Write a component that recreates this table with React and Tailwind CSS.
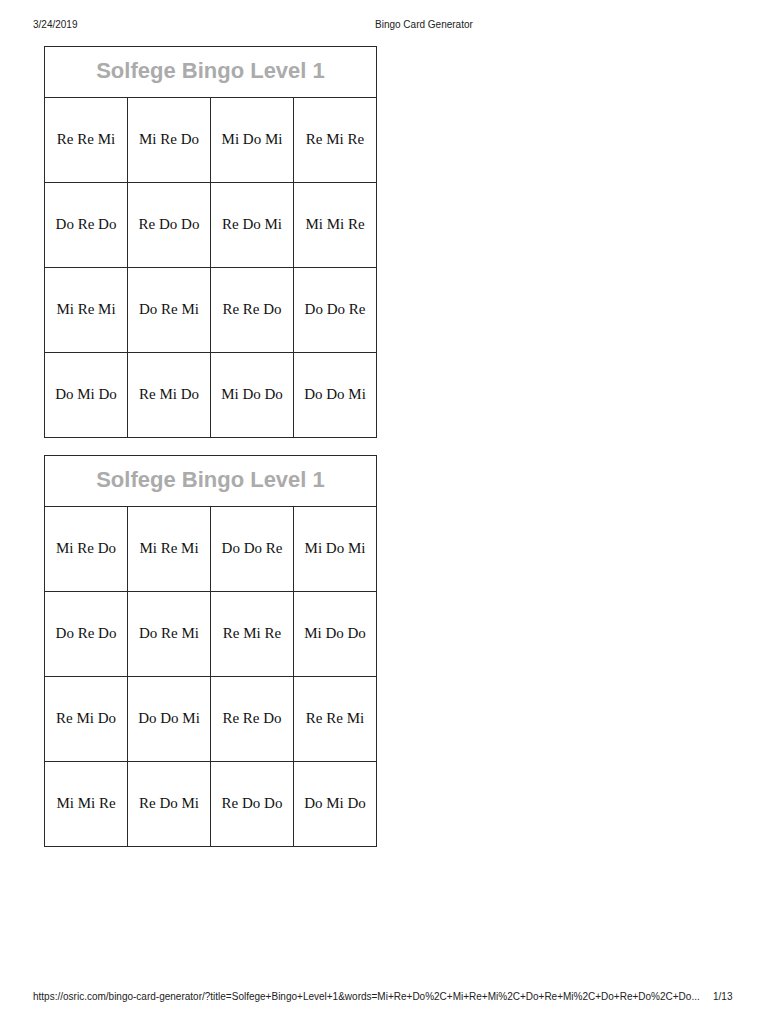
import React from "react";

const cards = [
  [
    ["Re Re Mi", "Mi Re Do", "Mi Do Mi", "Re Mi Re"],
    ["Do Re Do", "Re Do Do", "Re Do Mi", "Mi Mi Re"],
    ["Mi Re Mi", "Do Re Mi", "Re Re Do", "Do Do Re"],
    ["Do Mi Do", "Re Mi Do", "Mi Do Do", "Do Do Mi"],
  ],
  [
    ["Mi Re Do", "Mi Re Mi", "Do Do Re", "Mi Do Mi"],
    ["Do Re Do", "Do Re Mi", "Re Mi Re", "Mi Do Do"],
    ["Re Mi Do", "Do Do Mi", "Re Re Do", "Re Re Mi"],
    ["Mi Mi Re", "Re Do Mi", "Re Do Do", "Do Mi Do"],
  ],
];

function BingoCard({ rows }) {
  return (
    <div className="w-[333px] border-l border-t border-[#2a2a2a]">
      {/* Title */}
      <div className="h-[51px] pb-[4px] flex items-center justify-center border-r border-b border-[#2a2a2a]">
        <span className="font-['Liberation_Sans',Arial,sans-serif] font-bold text-[22px] text-[#ababab]">
          Solfege Bingo Level 1
        </span>
      </div>

      {/* Grid */}
      {rows.map((row, i) => (
        <div key={i} className="grid grid-cols-[83px_83px_83px_83px]">
          {row.map((word, j) => (
            <div
              key={j}
              className="h-[85px] pb-[2px] flex items-center justify-center border-r border-b border-[#2a2a2a] font-['Liberation_Serif','Times_New_Roman',serif] text-[15px] text-[#111]"
            >
              {word}
            </div>
          ))}
        </div>
      ))}
    </div>
  );
}

export default function App() {
  return (
    <div className="w-[768px] h-[1024px] bg-white flex flex-col font-['Liberation_Sans',Arial,sans-serif] text-[10px] text-[#222]">
      {/* Header */}
      <div className="flex pt-[19px] pl-[33px] leading-[12px]">
        <span className="w-[342px] shrink-0">3/24/2019</span>
        <span>Bingo Card Generator</span>
      </div>

      {/* Cards */}
      <div className="pl-[44px] pt-[15px] flex flex-col gap-[17px]">
        {cards.map((rows, i) => (
          <BingoCard key={i} rows={rows} />
        ))}
      </div>

      {/* Footer */}
      <div className="mt-auto flex pl-[33px] pb-[21px] leading-[12px]">
        <span className="w-[680px] shrink-0 whitespace-nowrap overflow-hidden">
          https://osric.com/bingo-card-generator/?title=Solfege+Bingo+Level+1&amp;words=Mi+Re+Do%2C+Mi+Re+Mi%2C+Do+Re+Mi%2C+Do+Re+Do%2C+Do...
        </span>
        <span>1/13</span>
      </div>
    </div>
  );
}
